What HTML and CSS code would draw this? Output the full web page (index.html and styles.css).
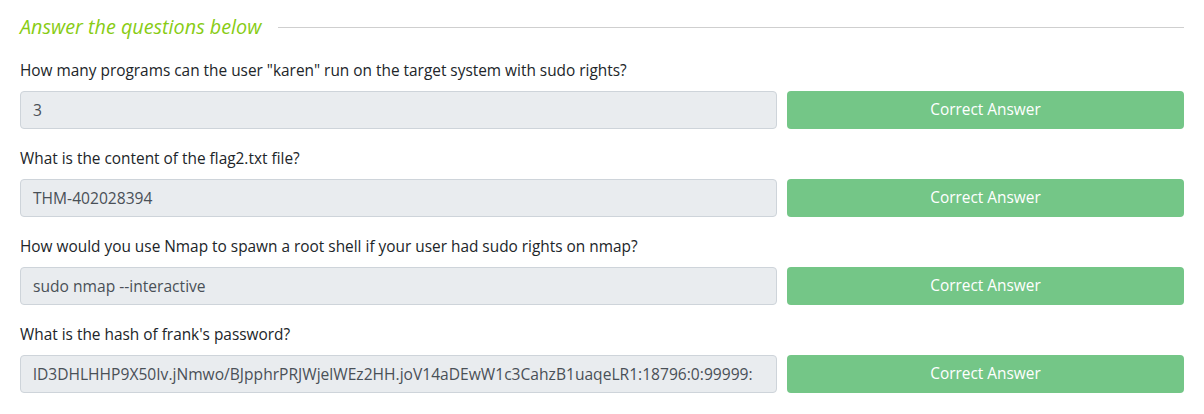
FILE: index.html
```html
<!DOCTYPE html>
<html lang="en">
<head>
<meta charset="utf-8">
<title>Answer the questions below</title>
<link rel="stylesheet" href="styles.css">
</head>
<body>
<div class="card">
  <div class="heading">
    <h4 class="heading-title">Answer the questions below</h4>
    <div class="heading-rule"></div>
  </div>

  <div class="question">
    <p class="question-text">How many programs can the user "karen" run on the target system with sudo rights?</p>
    <div class="answer-row">
      <div class="answer-input">3</div>
      <button class="answer-btn">Correct Answer</button>
    </div>
  </div>

  <div class="question">
    <p class="question-text">What is the content of the flag2.txt file?</p>
    <div class="answer-row">
      <div class="answer-input">THM-402028394</div>
      <button class="answer-btn">Correct Answer</button>
    </div>
  </div>

  <div class="question">
    <p class="question-text">How would you use Nmap to spawn a root shell if your user had sudo rights on nmap?</p>
    <div class="answer-row">
      <div class="answer-input">sudo nmap --interactive</div>
      <button class="answer-btn">Correct Answer</button>
    </div>
  </div>

  <div class="question">
    <p class="question-text">What is the hash of frank's password?</p>
    <div class="answer-row">
      <div class="answer-input">lD3DHLHHP9X50Iv.jNmwo/BJpphrPRJWjelWEz2HH.joV14aDEwW1c3CahzB1uaqeLR1:18796:0:99999:</div>
      <button class="answer-btn">Correct Answer</button>
    </div>
  </div>
</div>
</body>
</html>
```

FILE: styles.css
```css
* {
  box-sizing: border-box;
}

html, body {
  margin: 0;
  padding: 0;
  background: #ffffff;
}

body {
  font-family: "Open Sans", "Noto Sans", "DejaVu Sans", sans-serif;
  color: #212529;
  height: 414px;
  overflow: hidden;
}

.card {
  padding: 13px 20px 18px 20px;
  border-bottom: 1px solid #dcdcdc;
  border-bottom-right-radius: 4px;
}

.heading {
  display: flex;
  align-items: center;
  gap: 17px;
  height: 28px;
  margin-bottom: 18px;
}

.heading-title {
  margin: 0;
  font-size: 19.8px;
  font-weight: 400;
  font-style: italic;
  color: #88cc14;
  white-space: nowrap;
  line-height: 28px;
}

.heading-rule {
  flex: 1;
  height: 1px;
  background: #cfcfcf;
  margin-top: 1px;
}

.question {
  margin-bottom: 18px;
}

.question-text {
  margin: 0 0 8px 0;
  font-size: 15.4px;
  line-height: 24px;
  height: 24px;
  white-space: nowrap;
}

.answer-row {
  display: grid;
  grid-template-columns: 757px 1fr;
  gap: 10px;
}

.answer-input {
  height: 38px;
  background: #e9ecef;
  border: 1px solid #ced4da;
  border-radius: 4px;
  padding: 0 12px;
  font-size: 15.6px;
  line-height: 36px;
  color: #495057;
  white-space: nowrap;
  overflow: hidden;
}

.answer-btn {
  height: 38px;
  border: none;
  border-radius: 4px;
  background: #74c687;
  color: #ffffff;
  font-family: inherit;
  font-size: 15.4px;
  line-height: 38px;
  padding: 0 12px;
  cursor: pointer;
}
```
